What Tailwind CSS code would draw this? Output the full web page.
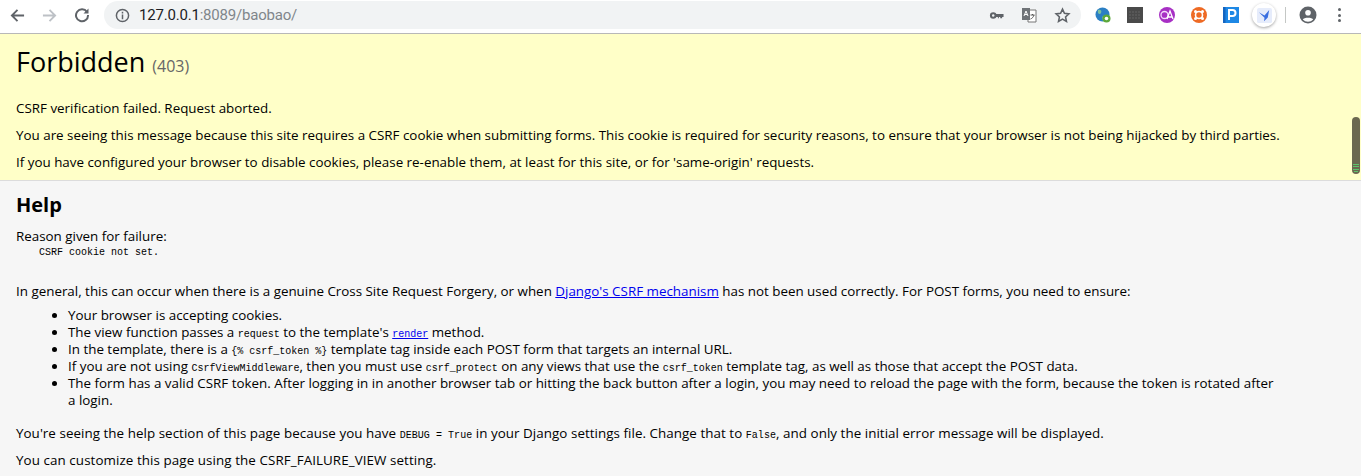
<!DOCTYPE html>
<html lang="en">
<head>
    <meta charset="UTF-8">
    <title>403 Forbidden</title>
    <script src="https://cdn.jsdelivr.net/npm/@tailwindcss/browser@4"></script>
</head>
<body class="h-[476px] overflow-hidden bg-[#f6f6f6] text-[13.38px] leading-[17px] text-black font-['Open_Sans',sans-serif]">

    <!-- Browser toolbar -->
    <div class="h-[34px] flex items-center pb-[3px] bg-white border-b border-[#b8b8b8] font-['Roboto',sans-serif]">
        <div class="w-[104px] shrink-0 flex items-center pl-[10px] gap-[17px]">
            <svg class="w-[15px] h-[15px]" viewBox="0 0 16 16" fill="none" stroke="#5f6368" stroke-width="2"><path d="M15 8H2M8 2 2 8l6 6"/></svg>
            <svg class="w-[15px] h-[15px]" viewBox="0 0 16 16" fill="none" stroke="#bdc1c6" stroke-width="2"><path d="M1 8h13M8 2l6 6-6 6"/></svg>
            <svg class="w-[16px] h-[16px]" viewBox="0 0 16 16" fill="none" stroke="#5f6368" stroke-width="2"><path d="M13 5a6 6 0 1 0 1 3"/><path d="M14.500 1.500v5h-5" fill="#5f6368" stroke="none"/></svg>
        </div>
        <div class="w-[977px] h-[28px] shrink-0 flex items-center rounded-full bg-[#f1f3f4] pl-[11px]">
            <svg class="w-[15px] h-[15px] shrink-0" viewBox="0 0 16 16" fill="none" stroke="#5f6368" stroke-width="1.600"><circle cx="8" cy="8" r="6.500"/><path d="M8 7v5M8 4v1.800"/></svg>
            <span class="ml-[9px] text-[15px] tracking-[-0.2px] text-[#202124]">127.0.0.1<span class="text-[#80868b]">:8089/baobao/</span></span>
            <div class="ml-auto flex items-center gap-[17px] pr-[10px]">
                <svg class="w-[15px] h-[15px]" viewBox="0 0 16 16" fill="#5f6368"><circle cx="4.500" cy="8" r="3.500"/><path d="M7 6.500h8.500v3h-1.500v1.500h-2v-1.500h-1.500v1.500h-1v-1.500h-2.500z"/><circle cx="4.500" cy="8" r="1.300" fill="#f1f3f4"/></svg>
                <svg class="w-[16px] h-[16px]" viewBox="0 0 16 16"><path d="M7 3h8v12H7z" fill="#fff" stroke="#777"/><path d="M1 1h8v12H1z" fill="#6f7377"/><path d="M3 9l2-5 2 5M3.800 7.500h2.400" fill="none" stroke="#fff"/><path d="M9.500 8h4M11.500 7v1M13 8c-.5 2-2 3.500-3.500 4" fill="none" stroke="#555"/></svg>
                <svg class="w-[17px] h-[17px]" viewBox="0 0 24 24" fill="none" stroke="#5f6368" stroke-width="2.200"><path d="m12 3 2.700 6 6.300.7-4.700 4.300 1.300 6.400-5.600-3.300-5.600 3.300L7.700 14 3 9.700 9.300 9z"/></svg>
            </div>
        </div>
        <div class="flex-1 flex items-center pl-[14px]">
            <svg class="w-[16px] h-[16px]" viewBox="0 0 16 16"><circle cx="7.500" cy="7.500" r="7" fill="#2b7fc4"/><path d="M3 3c3-1 4 1 3 3S2 7 3 3zM7 10l3-2 1 4-3 2z" fill="#7cc0a0"/><circle cx="11.500" cy="11.500" r="4" fill="#5da83a"/><circle cx="11.500" cy="11.500" r="1.800" fill="#fff"/></svg>
            <svg class="w-[16px] h-[16px] ml-[16px]" viewBox="0 0 16 16"><rect width="16" height="16" fill="#4a4a4a"/><path d="M2 5h12M2 8h12M2 11h12" stroke="#5c5c5c" stroke-width="1.500" stroke-dasharray="2 1"/></svg>
            <svg class="w-[16px] h-[16px] ml-[16px]" viewBox="0 0 16 16"><circle cx="8" cy="8" r="8" fill="#a72fc4"/><circle cx="5.500" cy="8" r="3.500" fill="none" stroke="#f3d9f9" stroke-width="1.300"/><path d="m8 12 3-8 3 8M9 10h4" fill="none" stroke="#fff" stroke-width="1.300"/></svg>
            <svg class="w-[16px] h-[16px] ml-[16px]" viewBox="0 0 16 16"><circle cx="8" cy="8" r="8" fill="#ee6a24"/><circle cx="8" cy="8" r="3.500" fill="none" stroke="#fff" stroke-width="1.600"/><circle cx="4.500" cy="4.500" r="1.500" fill="#fff"/><circle cx="11.500" cy="4.500" r="1.500" fill="#fff"/><circle cx="4.500" cy="11.500" r="1.500" fill="#fff"/><circle cx="11.500" cy="11.500" r="1.500" fill="#fff"/></svg>
            <svg class="w-[16px] h-[16px] ml-[16px]" viewBox="0 0 16 16"><rect width="16" height="16" fill="#1e88e5"/><rect width="2.500" height="16" fill="#1565c0"/><path d="M6 13V3h3.500a3 3 0 0 1 0 6H6" fill="none" stroke="#fff" stroke-width="2"/></svg>
            <div class="ml-[13px] w-[24px] h-[24px] flex items-center justify-center rounded-full bg-white shadow-[0_1px_3px_rgba(0,0,0,0.35)]">
                <svg class="w-[15px] h-[15px]" viewBox="0 0 16 16"><rect width="16" height="16" rx="2" fill="#e6ecfb"/><path d="M2 4.500 8 8l5-6-1.500 8-4 4 .5-3.500z" fill="#3a6fe0"/></svg>
            </div>
            <div class="ml-[9px] w-px h-[16px] bg-[#c4c7c5]"></div>
            <svg class="w-[18px] h-[18px] ml-[13px]" viewBox="0 0 18 18"><circle cx="9" cy="9" r="8.500" fill="#5f6368"/><circle cx="9" cy="6.800" r="2.800" fill="#fff"/><path d="M3.800 13.500c1-2.500 9.400-2.500 10.400 0a7 7 0 0 1-10.400 0z" fill="#fff"/></svg>
            <div class="ml-[21px] flex flex-col gap-[2.500px]">
                <span class="w-[3px] h-[3px] rounded-full bg-[#5f6368]"></span>
                <span class="w-[3px] h-[3px] rounded-full bg-[#5f6368]"></span>
                <span class="w-[3px] h-[3px] rounded-full bg-[#5f6368]"></span>
            </div>
        </div>
    </div>

    <!-- Summary -->
    <div class="relative h-[147px] px-[16px] pt-[11px] bg-[#ffffc8] border-b border-[#dcdcdc]">
        <h1 class="h-[36px] text-[27px] leading-[34px] font-normal">Forbidden <span class="text-[16px] text-[#666]">(403)</span></h1>
        <p class="mt-[19px]">CSRF verification failed. Request aborted.</p>
        <p class="mt-[10px] whitespace-nowrap">You are seeing this message because this site requires a CSRF cookie when submitting forms. This cookie is required for security reasons, to ensure that your browser is not being hijacked by third parties.</p>
        <p class="mt-[10px]">If you have configured your browser to disable cookies, please re-enable them, at least for this site, or for 'same-origin' requests.</p>
        <!-- Scrollbar thumb -->
        <div class="absolute right-[1px] top-[83px] w-[8px] h-[57px] rounded-full bg-[#6b6850] flex flex-col justify-end items-center gap-[1.500px] pb-[2px]">
            <span class="w-[6px] h-px bg-[#5ec46a]"></span>
            <span class="w-[6px] h-px bg-[#5ec46a]"></span>
            <span class="w-[6px] h-px bg-[#5ec46a]"></span>
            <span class="w-[4px] h-px bg-[#5ec46a]"></span>
        </div>
    </div>

    <!-- Help -->
    <div class="px-[16px] pt-[13px]">
        <h2 class="text-[20px] leading-[22px] font-bold">Help</h2>
        <p class="mt-[12px]">Reason given for failure:</p>
        <pre class="mt-px ml-[23px] font-['Liberation_Mono',monospace] text-[10px] leading-[14px]">CSRF cookie not set.</pre>
        <p class="mt-[23px]">In general, this can occur when there is a genuine Cross Site Request Forgery, or when <a href="#" class="text-[#0000ee] underline">Django's CSRF mechanism</a> has not been used correctly. For POST forms, you need to ensure:</p>
        <ul class="mt-[7px] ml-[52px] w-[1214px] list-disc">
            <li>Your browser is accepting cookies.</li>
            <li>The view function passes a <code class="font-['Liberation_Mono',monospace] text-[10px] leading-none">request</code> to the template's <a href="#" class="text-[#0000ee] underline"><code class="font-['Liberation_Mono',monospace] text-[10px] leading-none">render</code></a> method.</li>
            <li>In the template, there is a <code class="font-['Liberation_Mono',monospace] text-[10px] leading-none">{% csrf_token %}</code> template tag inside each POST form that targets an internal URL.</li>
            <li>If you are not using <code class="font-['Liberation_Mono',monospace] text-[10px] leading-none">CsrfViewMiddleware</code>, then you must use <code class="font-['Liberation_Mono',monospace] text-[10px] leading-none">csrf_protect</code> on any views that use the <code class="font-['Liberation_Mono',monospace] text-[10px] leading-none">csrf_token</code> template tag, as well as those that accept the POST data.</li>
            <li>The form has a valid CSRF token. After logging in in another browser tab or hitting the back button after a login, you may need to reload the page with the form, because the token is rotated after a login.</li>
        </ul>
        <p class="mt-[16px] tracking-[0.05px]">You're seeing the help section of this page because you have <code class="font-['Liberation_Mono',monospace] text-[10px] leading-none">DEBUG = True</code> in your Django settings file. Change that to <code class="font-['Liberation_Mono',monospace] text-[10px] leading-none">False</code>, and only the initial error message will be displayed.</p>
        <p class="mt-[10px] tracking-[0.08px]">You can customize this page using the CSRF_FAILURE_VIEW setting.</p>
    </div>

</body>
</html>
